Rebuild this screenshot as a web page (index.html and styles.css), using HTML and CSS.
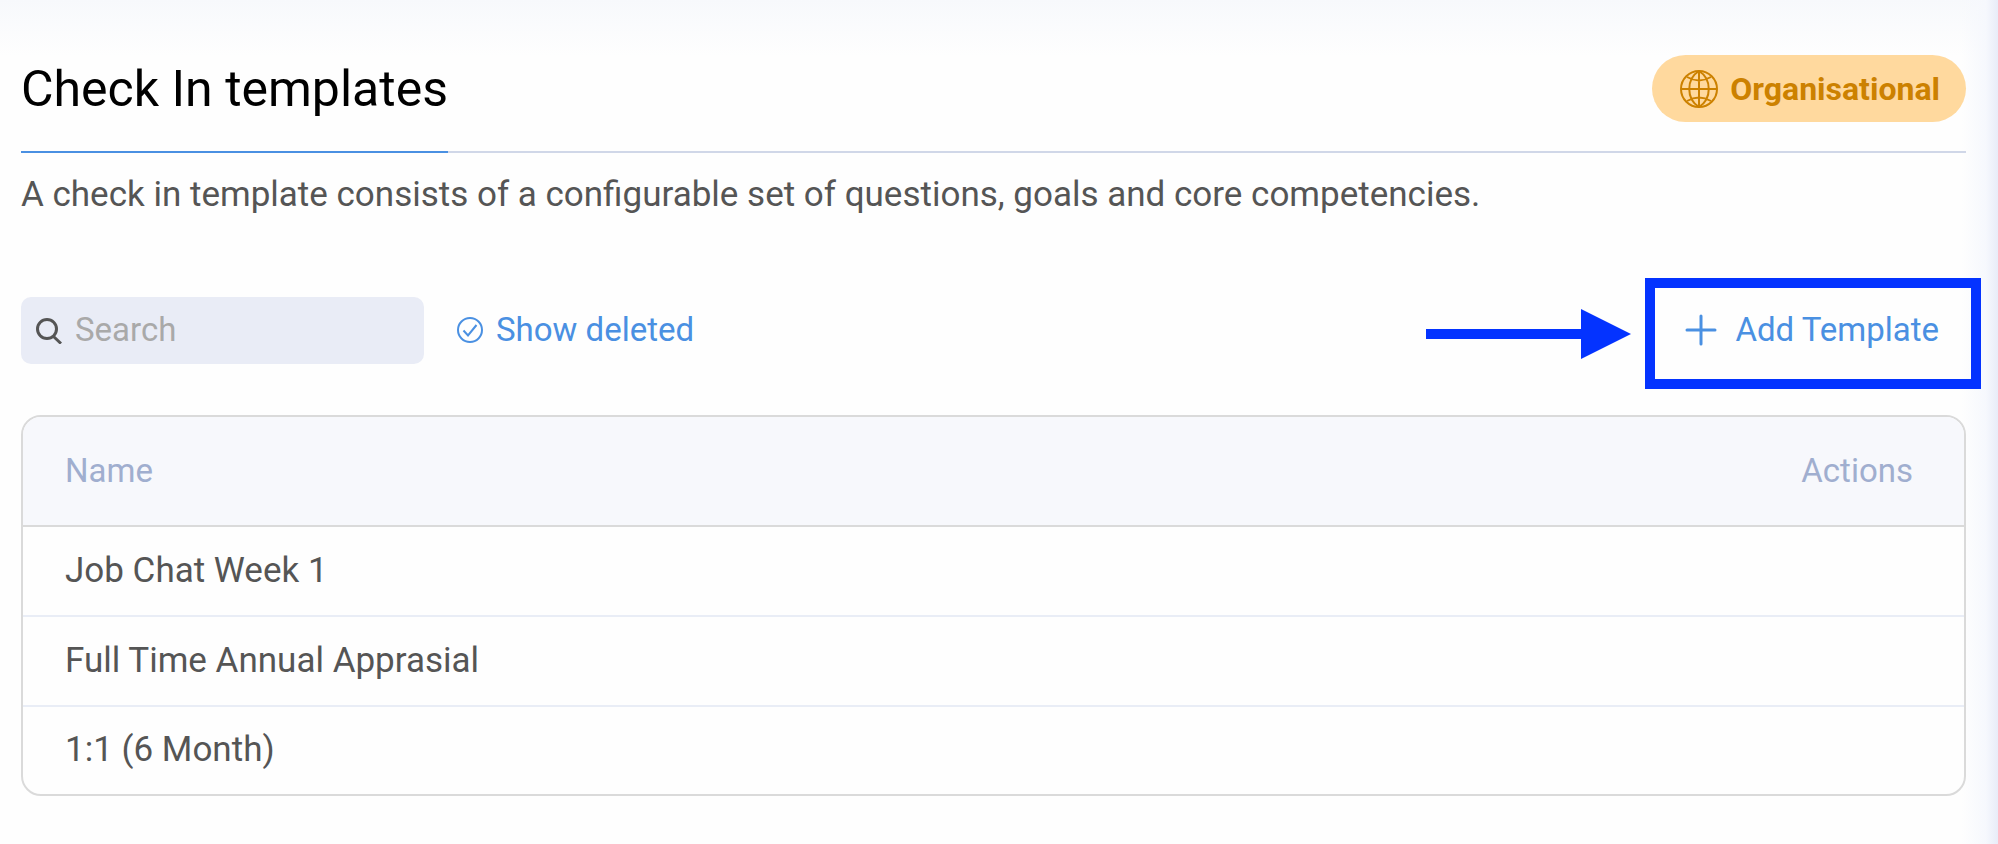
FILE: index.html
```html
<!DOCTYPE html>
<html lang="en">
<head>
  <meta charset="UTF-8">
  <meta name="viewport" content="width=device-width, initial-scale=1.0">
  <title>Check In templates</title>
  <link rel="stylesheet" href="styles.css">
</head>
<body>
  <main class="page">
    <header class="page-header">
      <h1 class="page-title">Check In templates</h1>
      <span class="badge">
        <svg class="badge-icon" viewBox="0 0 38 38" fill="none" stroke="currentColor" stroke-width="2" aria-hidden="true">
          <circle cx="19" cy="19" r="18"/>
          <path d="M19 1C6 9 6 29 19 37M19 1c13 8 13 28 0 36M19 1v36M1 19h36M7 7q12 7 24 0M7 31q12-7 24 0"/>
        </svg>
        Organisational
      </span>
    </header>
    <p class="description">A check in template consists of a configurable set of questions, goals and core competencies.</p>

    <div class="toolbar">
      <label class="search">
        <svg class="icon" viewBox="0 0 26 26" fill="none" stroke="currentColor" stroke-width="3" aria-hidden="true">
          <circle cx="11" cy="11" r="9.5"/>
          <path d="M17.5 18.5l7.5 7"/>
        </svg>
        <input class="search-input" type="search" placeholder="Search" aria-label="Search">
      </label>
      <button class="link-button" type="button">
        <svg class="icon" viewBox="0 0 26 26" fill="none" stroke="currentColor" stroke-width="2" aria-hidden="true">
          <circle cx="13" cy="13" r="12"/>
          <path d="M6.500 13.500l4.500 5 8.500-10.500"/>
        </svg>
        Show deleted
      </button>
      <div class="add-wrap">
        <button class="link-button add-button" type="button">
          <svg class="plus-icon" viewBox="0 0 32 32" fill="none" stroke="currentColor" stroke-width="3" stroke-linecap="round" aria-hidden="true">
            <path d="M16 2v28M2 16h28"/>
          </svg>
          Add Template
        </button>
        <div class="callout"></div>
        <svg class="arrow" viewBox="0 0 205 50" aria-hidden="true">
          <path d="M0 20h155V0l50 25-50 25V30H0z" fill="#0433ff"/>
        </svg>
      </div>
    </div>

    <table class="templates">
      <thead>
        <tr><th>Name</th><th class="actions">Actions</th></tr>
      </thead>
      <tbody>
        <tr><td>Job Chat Week 1</td><td></td></tr>
        <tr><td>Full Time Annual Apprasial</td><td></td></tr>
        <tr><td>1:1 (6 Month)</td><td></td></tr>
      </tbody>
    </table>
  </main>
</body>
</html>
```
FILE: styles.css
```css
* {
  box-sizing: border-box;
}
body {
  margin: 0;
  font-family: Roboto, Arial, sans-serif;
  font-size: 33px;
  color: #555;
  background-color: #fefefe;
}
.page {
  min-height: 100vh;
  padding: 55px 32px 48px 21px;
  background:
    linear-gradient(to left, #e8ecf8, #f6f8fd 12px, rgba(254, 254, 254, 0) 36px),
    linear-gradient(#f7f9fc, #fefefe 56px);
}
.page-header {
  display: flex;
  justify-content: space-between;
  align-items: flex-start;
  border-bottom: 2px solid #d0d7e8;
}
.page-title {
  margin: 0 0 -2px;
  padding-bottom: 28px;
  border-bottom: 2px solid #4a90e2;
  font-size: 50px;
  line-height: 68px;
  font-weight: 400;
  color: #000;
}
.badge {
  display: flex;
  align-items: center;
  gap: 12px;
  height: 67px;
  padding: 0 26px 0 28px;
  border-radius: 34px;
  background-color: #ffd99e;
  color: #cc8100;
  font-size: 32px;
  font-weight: 700;
}
.badge-icon {
  width: 38px;
  height: 38px;
}
.description {
  margin: 21px 0 81px;
  font-size: 35px;
  line-height: 42px;
}
.toolbar {
  display: flex;
  align-items: center;
  height: 67px;
  margin-bottom: 51px;
}
.search {
  display: flex;
  align-items: center;
  gap: 13px;
  width: 403px;
  height: 67px;
  margin-right: 33px;
  padding: 0 15px;
  border-radius: 10px;
  background-color: #e9ecf6;
}
.icon {
  flex: none;
  width: 26px;
  height: 26px;
}
.search-input {
  flex: 1;
  min-width: 0;
  padding: 0 0 2px;
  border: none;
  outline: none;
  background: none;
  font: inherit;
  color: #555;
}
.search-input::placeholder {
  color: #a9a9a9;
}
.link-button {
  display: flex;
  align-items: center;
  gap: 13px;
  padding: 0 0 2px;
  border: none;
  background: none;
  font: inherit;
  color: #4a90e2;
  cursor: pointer;
}
.add-wrap {
  position: relative;
  margin-left: auto;
}
.add-button {
  gap: 18px;
  height: 67px;
  padding: 0 27px 2px;
}
.plus-icon {
  width: 32px;
  height: 32px;
}
/* highlight around the add button */
.callout {
  position: absolute;
  top: -19px;
  right: -15px;
  width: 336px;
  height: 111px;
  border: 10px solid #0433ff;
  pointer-events: none;
}
.arrow {
  position: absolute;
  top: 12px;
  right: 335px;
  width: 205px;
  height: 50px;
}
.templates {
  width: 100%;
  border: 2px solid #dadada;
  border-radius: 20px;
  border-spacing: 0;
  overflow: hidden;
}
.templates th {
  height: 110px;
  padding: 0 51px 2px 42px;
  border-bottom: 2px solid #dadada;
  background-color: #f7f8fc;
  font-weight: 400;
  text-align: left;
  color: #a0aecf;
}
.templates .actions {
  text-align: right;
}
.templates td {
  height: 90px;
  padding: 0 42px 2px;
  border-bottom: 2px solid #e9edf6;
  font-size: 35px;
}
.templates tbody tr:last-child td {
  height: 87px;
  border-bottom: none;
}
```
